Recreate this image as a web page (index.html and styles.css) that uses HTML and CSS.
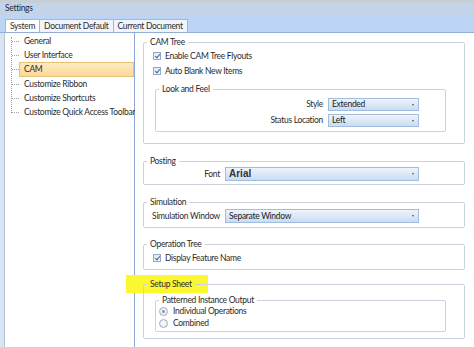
FILE: index.html
```html
<!DOCTYPE html>
<html lang="en">
<head>
  <meta charset="UTF-8" />
  <title>Settings</title>
  <link rel="stylesheet" href="styles.css">
</head>
<body>
  <div class="window">
    <div class="titlebar">Settings</div>

    <div class="tabbar">
      <div class="tab active">System</div>
      <div class="tab">Document Default</div>
      <div class="tab">Current Document</div>
    </div>

    <div class="main">
      <!-- left navigation tree -->
      <ul class="tree">
        <li>General</li>
        <li>User Interface</li>
        <li class="selected">CAM</li>
        <li>Customize Ribbon</li>
        <li>Customize Shortcuts</li>
        <li>Customize Quick Access Toolbar</li>
      </ul>

      <div class="pane">
        <fieldset class="group cam-tree">
          <legend>CAM Tree</legend>
          <label class="check first"><span class="box checked"></span>Enable CAM Tree Flyouts</label>
          <label class="check"><span class="box checked"></span>Auto Blank New Items</label>

          <fieldset class="group inner look">
            <legend>Look and Feel</legend>
            <div class="row">
              <span class="label">Style</span>
              <div class="combo small">Extended</div>
            </div>
            <div class="row">
              <span class="label">Status Location</span>
              <div class="combo small">Left</div>
            </div>
          </fieldset>
        </fieldset>

        <fieldset class="group posting">
          <legend>Posting</legend>
          <div class="row wide">
            <span class="label">Font</span>
            <div class="combo font-combo">Arial</div>
          </div>
        </fieldset>

        <fieldset class="group simulation">
          <legend>Simulation</legend>
          <div class="row wide">
            <span class="label">Simulation Window</span>
            <div class="combo">Separate Window</div>
          </div>
        </fieldset>

        <fieldset class="group op-tree">
          <legend>Operation Tree</legend>
          <label class="check"><span class="box checked"></span>Display Feature Name</label>
        </fieldset>

        <fieldset class="group setup">
          <legend class="marked">Setup Sheet</legend>
          <fieldset class="group inner patterned">
            <legend>Patterned Instance Output</legend>
            <label class="radio"><span class="dot on"></span>Individual Operations</label>
            <label class="radio"><span class="dot"></span>Combined</label>
          </fieldset>
        </fieldset>
      </div>
    </div>
  </div>
</body>
</html>
```

FILE: styles.css
```css
* {
  box-sizing: border-box;
}

body {
  margin: 0;
  font-family: Lato, 'Open Sans', sans-serif;
  font-size: 8.5px;
  letter-spacing: -0.3px;
  color: #2b2b2b;
}

.window {
  width: 474px;
  height: 347px;
  overflow: hidden;
  display: flex;
  flex-direction: column;
  background: #d9e5f3;
}

.titlebar {
  flex: none;
  height: 15px;
  border-top: 3px solid #c6ced8;
  background: #c3d3e8;
  padding-left: 5px;
  line-height: 11px;
  color: #1f2a38;
}

.tabbar {
  flex: none;
  height: 18px;
  display: flex;
  align-items: flex-end;
  padding-left: 5px;
  background: #bcd5f4;
  border-bottom: 1px solid #93aed2;
}

.tab {
  height: 13px;
  line-height: 12px;
  padding: 0 4px;
  border: 1px solid #a3b7d2;
  border-bottom: none;
  border-left: none;
  background: #f1f5fb;
  white-space: nowrap;
}

.tab.active {
  border-left: 1px solid #a3b7d2;
  background: #ffffff;
}

.main {
  flex: 1;
  min-height: 0;
  display: flex;
  margin-left: 4px;
  border-left: 1px solid #b5c3d6;
  background: #ffffff;
}

/* tree */

.tree {
  list-style: none;
  margin: 0;
  padding: 1px 0 0 0;
  width: 130px;
  flex: none;
  border-right: 1px solid #8ea8d6;
  position: relative;
}

.tree::before {
  content: '';
  position: absolute;
  left: 6px;
  top: 4px;
  height: 76px;
  border-left: 1px dotted #a0a0a0;
}

.tree li {
  position: relative;
  height: 14.2px;
  line-height: 13px;
  margin-left: 14px;
  padding-left: 4px;
  white-space: nowrap;
  border: 1px solid transparent;
}

.tree li::before {
  content: '';
  position: absolute;
  left: -8px;
  top: 6px;
  width: 7px;
  border-top: 1px dotted #a0a0a0;
}

.tree li.selected {
  background: linear-gradient(#fdeac2, #fbd996);
  border-color: #e8c27a;
}

/* right pane */

.pane {
  flex: 1;
  min-height: 0;
  padding: 4px 0 0 8px;
  position: relative;
  z-index: 0;
  background: #ffffff;
}

.group {
  margin: 0 9px 12px 0;
  padding: 0;
  border: 1px solid #cbd2dc;
  border-radius: 2px;
  min-width: 0;
}

.group legend {
  margin-left: 3px;
  padding: 0 3px;
  line-height: 10px;
  height: 10px;
  white-space: nowrap;
}

/* yellow marker drawn over the screenshot */
.group legend.marked {
  position: relative;
}

.group legend.marked::before {
  content: '';
  position: absolute;
  left: -21px;
  right: -13px;
  top: -4px;
  bottom: -4px;
  background: #fbf832;
  z-index: -1;
  filter: blur(0.6px);
}

.group.inner {
  margin: 6px 18px 0 11px;
}

.cam-tree {
  padding-bottom: 11px;
}

.posting {
  padding-bottom: 3px;
}

.simulation {
  margin-bottom: 11px;
  padding-bottom: 4px;
}

.op-tree {
  margin-bottom: 9px;
  padding-bottom: 4px;
}

.setup {
  padding-bottom: 6px;
}

.look {
  padding-bottom: 4px;
}

.patterned {
  margin-top: 5px;
  padding-bottom: 2px;
}

/* checkboxes and radios */

.check {
  display: flex;
  align-items: center;
  height: 15px;
  margin-left: 9px;
  white-space: nowrap;
}

.check.first {
  margin-top: 1px;
}

.op-tree .check {
  margin-top: 1px;
}

.box {
  width: 8px;
  height: 8px;
  margin-right: 4px;
  border: 1px solid #93a9c6;
  background: linear-gradient(#dfe8f4, #f5f8fc);
  position: relative;
}

.box.checked::after {
  content: '';
  position: absolute;
  left: 2px;
  top: 0px;
  width: 2px;
  height: 4px;
  border: solid #3b64a8;
  border-width: 0 1.4px 1.4px 0;
  transform: rotate(40deg);
}

.radio {
  display: flex;
  align-items: center;
  height: 12px;
  margin-left: 3px;
  white-space: nowrap;
}

.dot {
  width: 9px;
  height: 9px;
  margin-right: 5px;
  border-radius: 50%;
  border: 1px solid #a3afc0;
  background: radial-gradient(#ffffff, #dfe5ee);
  position: relative;
}

.dot.on::after {
  content: '';
  position: absolute;
  left: 2px;
  top: 2px;
  width: 3px;
  height: 3px;
  border-radius: 50%;
  background: #8a939e;
}

/* label + combo rows */

.row {
  display: flex;
  align-items: center;
  justify-content: flex-end;
  height: 14px;
  margin: 3px 26px 0 0;
  white-space: nowrap;
}

.row + .row {
  margin-top: 2px;
}

.row .label {
  margin-right: 5px;
}

.row.wide {
  margin: 1px 45px 0 0;
}

.simulation .row.wide {
  margin-top: 2px;
}

.combo {
  position: relative;
  flex: none;
  width: 194px;
  height: 14px;
  line-height: 12px;
  padding-left: 3px;
  border: 1px solid #a2bcde;
  background: linear-gradient(#eef4fc, #c9dcf3);
  color: #1a1a1a;
}

.combo.small {
  width: 91px;
  height: 13px;
  line-height: 11px;
}

.combo::after {
  content: '';
  position: absolute;
  right: 4px;
  top: 5px;
  border-left: 1.5px solid transparent;
  border-right: 1.5px solid transparent;
  border-top: 2px solid #555;
}

.font-combo {
  font-family: 'Liberation Sans', Arial, sans-serif;
  font-size: 10px;
  font-weight: bold;
  letter-spacing: 0;
  color: #333;
}
```
